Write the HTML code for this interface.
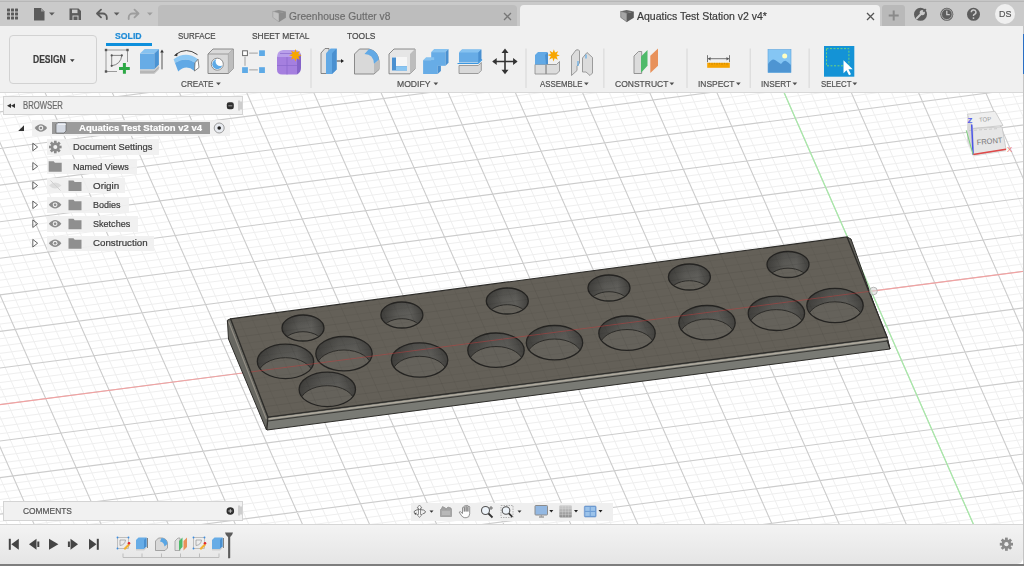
<!DOCTYPE html>
<html><head><meta charset="utf-8">
<style>
*{margin:0;padding:0;box-sizing:border-box}
html,body{width:1024px;height:566px;overflow:hidden;background:#fff;font-family:"Liberation Sans",sans-serif}
.abs{position:absolute}
.t{position:absolute;white-space:nowrap;transform-origin:0 0;line-height:1;-webkit-text-stroke:0.2px currentColor}
</style></head><body>
<svg class="abs" style="left:0;top:0" width="1024" height="566" viewBox="0 0 1024 566">
<defs>
<clipPath id="vp"><rect x="0" y="92" width="1024" height="432"/></clipPath>
<linearGradient id="wall" x1="0" y1="0" x2="1" y2="0">
<stop offset="0" stop-color="#3f3e3b"/><stop offset="0.4" stop-color="#5a5955"/><stop offset="0.7" stop-color="#5f5e5a"/><stop offset="1" stop-color="#42413e"/></linearGradient>
<linearGradient id="wallv" x1="0" y1="0" x2="0" y2="1">
<stop offset="0" stop-color="#000" stop-opacity="0.15"/><stop offset="0.45" stop-color="#000" stop-opacity="0"/></linearGradient>
<clipPath id="h0"><ellipse cx="303" cy="328" rx="21" ry="13"/></clipPath><clipPath id="h1"><ellipse cx="401.9" cy="315" rx="21" ry="13"/></clipPath><clipPath id="h2"><ellipse cx="507.3" cy="301" rx="21" ry="13"/></clipPath><clipPath id="h3"><ellipse cx="609" cy="288" rx="21" ry="13"/></clipPath><clipPath id="h4"><ellipse cx="689.4" cy="277" rx="21" ry="13"/></clipPath><clipPath id="h5"><ellipse cx="788" cy="264.5" rx="21" ry="13"/></clipPath><clipPath id="h6"><ellipse cx="285.5" cy="361.4" rx="28.2" ry="17.2"/></clipPath><clipPath id="h7"><ellipse cx="344" cy="353.7" rx="28.2" ry="17.2"/></clipPath><clipPath id="h8"><ellipse cx="327.3" cy="389.4" rx="28.2" ry="17.2"/></clipPath><clipPath id="h9"><ellipse cx="419.6" cy="360" rx="28.2" ry="17.2"/></clipPath><clipPath id="h10"><ellipse cx="496" cy="350.2" rx="28.2" ry="17.2"/></clipPath><clipPath id="h11"><ellipse cx="554.5" cy="342.7" rx="28.2" ry="17.2"/></clipPath><clipPath id="h12"><ellipse cx="627" cy="333.2" rx="28.2" ry="17.2"/></clipPath><clipPath id="h13"><ellipse cx="707" cy="322.7" rx="28.2" ry="17.2"/></clipPath><clipPath id="h14"><ellipse cx="776.4" cy="313.3" rx="28.2" ry="17.2"/></clipPath><clipPath id="h15"><ellipse cx="835" cy="305.5" rx="28.2" ry="17.2"/></clipPath>
<clipPath id="topf"><polygon points="230.6,318.8 847.0,237.0 887.0,337.0 268.0,417.0"/></clipPath>
</defs>
<g clip-path="url(#vp)">
<path d="M-9.9 698.0L-284.8 75.8M2.7 696.3L-272.1 74.1M15.4 694.7L-259.4 72.4M28.1 693.0L-246.7 70.8M53.5 689.7L-221.3 67.5M66.1 688.1L-208.6 65.8M78.8 686.4L-195.9 64.2M91.5 684.8L-183.1 62.5M116.9 681.5L-157.7 59.2M129.6 679.8L-145.0 57.5M142.2 678.2L-132.3 55.9M154.9 676.5L-119.6 54.2M180.3 673.2L-94.2 50.9M193.0 671.6L-81.5 49.2M205.7 669.9L-68.8 47.6M218.3 668.3L-56.1 45.9M243.7 665.0L-30.7 42.6M256.4 663.3L-18.0 41.0M269.1 661.7L-5.3 39.3M281.8 660.1L7.4 37.7M307.1 656.8L32.8 34.3M319.8 655.1L45.6 32.7M332.5 653.5L58.3 31.0M345.2 651.8L71.0 29.4M370.6 648.5L96.4 26.1M383.3 646.9L109.1 24.4M395.9 645.2L121.8 22.7M408.6 643.6L134.5 21.1M434.0 640.3L159.9 17.8M446.7 638.6L172.6 16.1M459.4 637.0L185.3 14.5M472.1 635.3L198.1 12.8M497.4 632.0L223.5 9.5M510.1 630.4L236.2 7.8M522.8 628.7L248.9 6.2M535.5 627.1L261.6 4.5M560.9 623.8L287.0 1.2M573.6 622.1L299.7 -0.5M586.3 620.5L312.4 -2.1M599.0 618.8L325.2 -3.8M624.3 615.5L350.6 -7.1M637.0 613.9L363.3 -8.7M649.7 612.2L376.0 -10.4M662.4 610.6L388.7 -12.1M687.8 607.3L414.1 -15.4M700.5 605.6L426.9 -17.0M713.2 604.0L439.6 -18.7M725.9 602.3L452.3 -20.4M751.2 599.0L477.7 -23.7M763.9 597.4L490.4 -25.3M776.6 595.7L503.1 -27.0M789.3 594.1L515.8 -28.6M814.7 590.7L541.3 -32.0M827.4 589.1L554.0 -33.6M840.1 587.4L566.7 -35.3M852.8 585.8L579.4 -36.9M878.2 582.5L604.8 -40.2M890.9 580.8L617.6 -41.9M903.6 579.2L630.3 -43.6M916.3 577.5L643.0 -45.2M941.6 574.2L668.4 -48.5M954.3 572.6L681.1 -50.2M967.0 570.9L693.9 -51.9M979.7 569.3L706.6 -53.5M1005.1 566.0L732.0 -56.8M1017.8 564.3L744.7 -58.5M1030.5 562.7L757.4 -60.1M1043.2 561.0L770.2 -61.8M1068.6 557.7L795.6 -65.1M1081.3 556.1L808.3 -66.8M1094.0 554.4L821.0 -68.4M1106.7 552.8L833.7 -70.1M1132.1 549.5L859.2 -73.4M1144.8 547.8L871.9 -75.1M1157.5 546.2L884.6 -76.7M1170.2 544.5L897.3 -78.4M1195.6 541.2L922.8 -81.7M1208.3 539.6L935.5 -83.4M1221.0 537.9L948.2 -85.0M1233.7 536.3L960.9 -86.7M1259.1 533.0L986.4 -90.0M1271.8 531.3L999.1 -91.7M1284.5 529.7L1011.8 -93.3M1297.2 528.0L1024.5 -95.0M-25.7 692.7L1306.8 519.5M-28.7 685.8L1303.8 512.5M-31.8 678.9L1300.8 505.6M-34.8 672.0L1297.8 498.7M-40.9 658.2L1291.7 484.9M-44.0 651.3L1288.7 478.0M-47.0 644.4L1285.7 471.1M-50.1 637.5L1282.6 464.2M-56.2 623.7L1276.6 450.3M-59.2 616.8L1273.6 443.4M-62.3 609.9L1270.5 436.5M-65.3 603.0L1267.5 429.6M-71.4 589.2L1261.5 415.8M-74.5 582.3L1258.4 408.9M-77.5 575.4L1255.4 401.9M-80.6 568.5L1252.4 395.0M-86.7 554.7L1246.3 381.2M-89.7 547.7L1243.3 374.3M-92.8 540.8L1240.3 367.4M-95.8 533.9L1237.3 360.5M-101.9 520.1L1231.2 346.6M-105.0 513.2L1228.2 339.7M-108.0 506.3L1225.2 332.8M-111.1 499.4L1222.1 325.9M-117.2 485.6L1216.1 312.0M-120.2 478.7L1213.0 305.1M-123.3 471.8L1210.0 298.2M-126.3 464.8L1207.0 291.3M-132.4 451.0L1200.9 277.4M-135.5 444.1L1197.9 270.5M-138.6 437.2L1194.9 263.6M-141.6 430.3L1191.8 256.7M-147.7 416.5L1185.8 242.8M-150.8 409.5L1182.8 235.9M-153.8 402.6L1179.7 229.0M-156.9 395.7L1176.7 222.1M-163.0 381.9L1170.6 208.2M-166.0 375.0L1167.6 201.3M-169.1 368.1L1164.6 194.4M-172.1 361.2L1161.6 187.5M-178.3 347.3L1155.5 173.6M-181.3 340.4L1152.5 166.7M-184.4 333.5L1149.4 159.8M-187.4 326.6L1146.4 152.8M-193.5 312.7L1140.4 139.0M-196.6 305.8L1137.3 132.1M-199.6 298.9L1134.3 125.1M-202.7 292.0L1131.3 118.2M-208.8 278.2L1125.2 104.4M-211.9 271.2L1122.2 97.4M-214.9 264.3L1119.1 90.5M-218.0 257.4L1116.1 83.6M-224.1 243.6L1110.0 69.7M-227.1 236.6L1107.0 62.8M-230.2 229.7L1104.0 55.9M-233.3 222.8L1100.9 48.9M-239.4 209.0L1094.9 35.1M-242.4 202.0L1091.9 28.2M-245.5 195.1L1088.8 21.2M-248.5 188.2L1085.8 14.3M-254.7 174.4L1079.7 0.4M-257.7 167.4L1076.7 -6.5M-260.8 160.5L1073.7 -13.4M-263.8 153.6L1070.6 -20.4M-269.9 139.7L1064.6 -34.2M-273.0 132.8L1061.5 -41.2M-276.1 125.9L1058.5 -48.1M-279.1 119.0L1055.5 -55.0M-285.2 105.1L1049.4 -68.9M-288.3 98.2L1046.4 -75.8M-291.4 91.3L1043.3 -82.8M-294.4 84.3L1040.3 -89.7" stroke="#efefef" stroke-width="1" fill="none"/>
<path d="M-22.6 699.6L-297.5 77.4M40.8 691.4L-234.0 69.1M104.2 683.1L-170.4 60.8M167.6 674.9L-106.9 52.6M231.0 666.6L-43.4 44.3M294.5 658.4L20.1 36.0M357.9 650.2L83.7 27.7M421.3 641.9L147.2 19.4M484.8 633.7L210.8 11.1M548.2 625.4L274.3 2.9M611.7 617.2L337.9 -5.4M675.1 608.9L401.4 -13.7M738.6 600.7L465.0 -22.0M802.0 592.4L528.6 -30.3M865.5 584.1L592.1 -38.6M928.9 575.9L655.7 -46.9M992.4 567.6L719.3 -55.2M1055.9 559.4L782.9 -63.5M1119.4 551.1L846.5 -71.8M1182.9 542.9L910.1 -80.0M1246.4 534.6L973.7 -88.3M1309.9 526.4L1037.3 -96.6M-22.6 699.6L1309.9 526.4M-37.9 665.1L1294.7 491.8M-53.1 630.6L1279.6 457.3M-68.4 596.1L1264.5 422.7M-83.6 561.6L1249.4 388.1M-98.9 527.0L1234.2 353.5M-114.1 492.5L1219.1 319.0M-129.4 457.9L1204.0 284.4M-144.7 423.4L1188.8 249.8M-159.9 388.8L1173.7 215.2M-175.2 354.2L1158.5 180.5M-190.5 319.7L1143.4 145.9M-205.7 285.1L1128.2 111.3M-221.0 250.5L1113.1 76.7M-236.3 215.9L1097.9 42.0M-251.6 181.3L1082.8 7.4M-266.9 146.7L1067.6 -27.3M-282.2 112.0L1052.4 -62.0M-297.5 77.4L1037.3 -96.6" stroke="#cccccc" stroke-width="1.1" fill="none"/>
<path d="M-144.7 423.4L1188.8 249.8" stroke="#f2a2a2" stroke-width="1.2"/>
<path d="M992.4 567.6L719.3 -55.2" stroke="#a6eaa6" stroke-width="1.2"/>
</g>
<!-- plate -->
<polygon points="230.6,318.8 227.4,320.2 228.5,339 266.5,430 268,417" fill="#676761" stroke="#2e2d2a" stroke-width="1"/>
<polygon points="268,417 887,337 890,349 267,430" fill="#797a74" stroke="#2e2d2a" stroke-width="1"/>
<polygon points="847,237 851,239 890,349 887,337" fill="#5e5d57" stroke="#2e2d2a" stroke-width="1"/>
<polygon points="230.6,318.8 847.0,237.0 887.0,337.0 268.0,417.0" fill="#646058" stroke="#2e2d2a" stroke-width="1.2"/>
<path d="M228.6 321.5 L266.3 419" stroke="#948f85" stroke-width="1.1"/><path d="M268.5 419 L887.5 339" stroke="#b0aa9e" stroke-width="1.5"/>
<path d="M268 421 L888 341" stroke="#3a3935" stroke-width="1"/>
<ellipse cx="303" cy="328" rx="21" ry="13" fill="url(#wall)"/><ellipse cx="303" cy="328" rx="21" ry="13" fill="url(#wallv)"/><g clip-path="url(#h0)"><ellipse cx="303" cy="344.7" rx="20.4" ry="13" fill="#65625b" stroke="#2e2d2a" stroke-width="1"/></g><ellipse cx="303" cy="328" rx="21" ry="13" fill="none" stroke="#252422" stroke-width="1.3"/><ellipse cx="401.9" cy="315" rx="21" ry="13" fill="url(#wall)"/><ellipse cx="401.9" cy="315" rx="21" ry="13" fill="url(#wallv)"/><g clip-path="url(#h1)"><ellipse cx="401.9" cy="331.7" rx="20.4" ry="13" fill="#65625b" stroke="#2e2d2a" stroke-width="1"/></g><ellipse cx="401.9" cy="315" rx="21" ry="13" fill="none" stroke="#252422" stroke-width="1.3"/><ellipse cx="507.3" cy="301" rx="21" ry="13" fill="url(#wall)"/><ellipse cx="507.3" cy="301" rx="21" ry="13" fill="url(#wallv)"/><g clip-path="url(#h2)"><ellipse cx="507.3" cy="317.7" rx="20.4" ry="13" fill="#65625b" stroke="#2e2d2a" stroke-width="1"/></g><ellipse cx="507.3" cy="301" rx="21" ry="13" fill="none" stroke="#252422" stroke-width="1.3"/><ellipse cx="609" cy="288" rx="21" ry="13" fill="url(#wall)"/><ellipse cx="609" cy="288" rx="21" ry="13" fill="url(#wallv)"/><g clip-path="url(#h3)"><ellipse cx="609" cy="304.7" rx="20.4" ry="13" fill="#65625b" stroke="#2e2d2a" stroke-width="1"/></g><ellipse cx="609" cy="288" rx="21" ry="13" fill="none" stroke="#252422" stroke-width="1.3"/><ellipse cx="689.4" cy="277" rx="21" ry="13" fill="url(#wall)"/><ellipse cx="689.4" cy="277" rx="21" ry="13" fill="url(#wallv)"/><g clip-path="url(#h4)"><ellipse cx="689.4" cy="293.7" rx="20.4" ry="13" fill="#65625b" stroke="#2e2d2a" stroke-width="1"/></g><ellipse cx="689.4" cy="277" rx="21" ry="13" fill="none" stroke="#252422" stroke-width="1.3"/><ellipse cx="788" cy="264.5" rx="21" ry="13" fill="url(#wall)"/><ellipse cx="788" cy="264.5" rx="21" ry="13" fill="url(#wallv)"/><g clip-path="url(#h5)"><ellipse cx="788" cy="281.2" rx="20.4" ry="13" fill="#65625b" stroke="#2e2d2a" stroke-width="1"/></g><ellipse cx="788" cy="264.5" rx="21" ry="13" fill="none" stroke="#252422" stroke-width="1.3"/><ellipse cx="285.5" cy="361.4" rx="28.2" ry="17.2" fill="url(#wall)"/><ellipse cx="285.5" cy="361.4" rx="28.2" ry="17.2" fill="url(#wallv)"/><g clip-path="url(#h6)"><ellipse cx="285.5" cy="374.9" rx="27.4" ry="17.2" fill="#65625b" stroke="#2e2d2a" stroke-width="1"/></g><ellipse cx="285.5" cy="361.4" rx="28.2" ry="17.2" fill="none" stroke="#252422" stroke-width="1.3"/><ellipse cx="344" cy="353.7" rx="28.2" ry="17.2" fill="url(#wall)"/><ellipse cx="344" cy="353.7" rx="28.2" ry="17.2" fill="url(#wallv)"/><g clip-path="url(#h7)"><ellipse cx="344" cy="367.2" rx="27.4" ry="17.2" fill="#65625b" stroke="#2e2d2a" stroke-width="1"/></g><ellipse cx="344" cy="353.7" rx="28.2" ry="17.2" fill="none" stroke="#252422" stroke-width="1.3"/><ellipse cx="327.3" cy="389.4" rx="28.2" ry="17.2" fill="url(#wall)"/><ellipse cx="327.3" cy="389.4" rx="28.2" ry="17.2" fill="url(#wallv)"/><g clip-path="url(#h8)"><ellipse cx="327.3" cy="402.9" rx="27.4" ry="17.2" fill="#65625b" stroke="#2e2d2a" stroke-width="1"/></g><ellipse cx="327.3" cy="389.4" rx="28.2" ry="17.2" fill="none" stroke="#252422" stroke-width="1.3"/><ellipse cx="419.6" cy="360" rx="28.2" ry="17.2" fill="url(#wall)"/><ellipse cx="419.6" cy="360" rx="28.2" ry="17.2" fill="url(#wallv)"/><g clip-path="url(#h9)"><ellipse cx="419.6" cy="373.5" rx="27.4" ry="17.2" fill="#65625b" stroke="#2e2d2a" stroke-width="1"/></g><ellipse cx="419.6" cy="360" rx="28.2" ry="17.2" fill="none" stroke="#252422" stroke-width="1.3"/><ellipse cx="496" cy="350.2" rx="28.2" ry="17.2" fill="url(#wall)"/><ellipse cx="496" cy="350.2" rx="28.2" ry="17.2" fill="url(#wallv)"/><g clip-path="url(#h10)"><ellipse cx="496" cy="363.7" rx="27.4" ry="17.2" fill="#65625b" stroke="#2e2d2a" stroke-width="1"/></g><ellipse cx="496" cy="350.2" rx="28.2" ry="17.2" fill="none" stroke="#252422" stroke-width="1.3"/><ellipse cx="554.5" cy="342.7" rx="28.2" ry="17.2" fill="url(#wall)"/><ellipse cx="554.5" cy="342.7" rx="28.2" ry="17.2" fill="url(#wallv)"/><g clip-path="url(#h11)"><ellipse cx="554.5" cy="356.2" rx="27.4" ry="17.2" fill="#65625b" stroke="#2e2d2a" stroke-width="1"/></g><ellipse cx="554.5" cy="342.7" rx="28.2" ry="17.2" fill="none" stroke="#252422" stroke-width="1.3"/><ellipse cx="627" cy="333.2" rx="28.2" ry="17.2" fill="url(#wall)"/><ellipse cx="627" cy="333.2" rx="28.2" ry="17.2" fill="url(#wallv)"/><g clip-path="url(#h12)"><ellipse cx="627" cy="346.7" rx="27.4" ry="17.2" fill="#65625b" stroke="#2e2d2a" stroke-width="1"/></g><ellipse cx="627" cy="333.2" rx="28.2" ry="17.2" fill="none" stroke="#252422" stroke-width="1.3"/><ellipse cx="707" cy="322.7" rx="28.2" ry="17.2" fill="url(#wall)"/><ellipse cx="707" cy="322.7" rx="28.2" ry="17.2" fill="url(#wallv)"/><g clip-path="url(#h13)"><ellipse cx="707" cy="336.2" rx="27.4" ry="17.2" fill="#65625b" stroke="#2e2d2a" stroke-width="1"/></g><ellipse cx="707" cy="322.7" rx="28.2" ry="17.2" fill="none" stroke="#252422" stroke-width="1.3"/><ellipse cx="776.4" cy="313.3" rx="28.2" ry="17.2" fill="url(#wall)"/><ellipse cx="776.4" cy="313.3" rx="28.2" ry="17.2" fill="url(#wallv)"/><g clip-path="url(#h14)"><ellipse cx="776.4" cy="326.8" rx="27.4" ry="17.2" fill="#65625b" stroke="#2e2d2a" stroke-width="1"/></g><ellipse cx="776.4" cy="313.3" rx="28.2" ry="17.2" fill="none" stroke="#252422" stroke-width="1.3"/><ellipse cx="835" cy="305.5" rx="28.2" ry="17.2" fill="url(#wall)"/><ellipse cx="835" cy="305.5" rx="28.2" ry="17.2" fill="url(#wallv)"/><g clip-path="url(#h15)"><ellipse cx="835" cy="319.0" rx="27.4" ry="17.2" fill="#65625b" stroke="#2e2d2a" stroke-width="1"/></g><ellipse cx="835" cy="305.5" rx="28.2" ry="17.2" fill="none" stroke="#252422" stroke-width="1.3"/>
<circle cx="873.5" cy="291" r="3.8" fill="#d8d8d8" fill-opacity="0.6" stroke="#a8a8a8" stroke-width="0.8"/>
<g clip-path="url(#topf)">
<path d="M-9.9 698.0L-284.8 75.8M2.7 696.3L-272.1 74.1M15.4 694.7L-259.4 72.4M28.1 693.0L-246.7 70.8M53.5 689.7L-221.3 67.5M66.1 688.1L-208.6 65.8M78.8 686.4L-195.9 64.2M91.5 684.8L-183.1 62.5M116.9 681.5L-157.7 59.2M129.6 679.8L-145.0 57.5M142.2 678.2L-132.3 55.9M154.9 676.5L-119.6 54.2M180.3 673.2L-94.2 50.9M193.0 671.6L-81.5 49.2M205.7 669.9L-68.8 47.6M218.3 668.3L-56.1 45.9M243.7 665.0L-30.7 42.6M256.4 663.3L-18.0 41.0M269.1 661.7L-5.3 39.3M281.8 660.1L7.4 37.7M307.1 656.8L32.8 34.3M319.8 655.1L45.6 32.7M332.5 653.5L58.3 31.0M345.2 651.8L71.0 29.4M370.6 648.5L96.4 26.1M383.3 646.9L109.1 24.4M395.9 645.2L121.8 22.7M408.6 643.6L134.5 21.1M434.0 640.3L159.9 17.8M446.7 638.6L172.6 16.1M459.4 637.0L185.3 14.5M472.1 635.3L198.1 12.8M497.4 632.0L223.5 9.5M510.1 630.4L236.2 7.8M522.8 628.7L248.9 6.2M535.5 627.1L261.6 4.5M560.9 623.8L287.0 1.2M573.6 622.1L299.7 -0.5M586.3 620.5L312.4 -2.1M599.0 618.8L325.2 -3.8M624.3 615.5L350.6 -7.1M637.0 613.9L363.3 -8.7M649.7 612.2L376.0 -10.4M662.4 610.6L388.7 -12.1M687.8 607.3L414.1 -15.4M700.5 605.6L426.9 -17.0M713.2 604.0L439.6 -18.7M725.9 602.3L452.3 -20.4M751.2 599.0L477.7 -23.7M763.9 597.4L490.4 -25.3M776.6 595.7L503.1 -27.0M789.3 594.1L515.8 -28.6M814.7 590.7L541.3 -32.0M827.4 589.1L554.0 -33.6M840.1 587.4L566.7 -35.3M852.8 585.8L579.4 -36.9M878.2 582.5L604.8 -40.2M890.9 580.8L617.6 -41.9M903.6 579.2L630.3 -43.6M916.3 577.5L643.0 -45.2M941.6 574.2L668.4 -48.5M954.3 572.6L681.1 -50.2M967.0 570.9L693.9 -51.9M979.7 569.3L706.6 -53.5M1005.1 566.0L732.0 -56.8M1017.8 564.3L744.7 -58.5M1030.5 562.7L757.4 -60.1M1043.2 561.0L770.2 -61.8M1068.6 557.7L795.6 -65.1M1081.3 556.1L808.3 -66.8M1094.0 554.4L821.0 -68.4M1106.7 552.8L833.7 -70.1M1132.1 549.5L859.2 -73.4M1144.8 547.8L871.9 -75.1M1157.5 546.2L884.6 -76.7M1170.2 544.5L897.3 -78.4M1195.6 541.2L922.8 -81.7M1208.3 539.6L935.5 -83.4M1221.0 537.9L948.2 -85.0M1233.7 536.3L960.9 -86.7M1259.1 533.0L986.4 -90.0M1271.8 531.3L999.1 -91.7M1284.5 529.7L1011.8 -93.3M1297.2 528.0L1024.5 -95.0M-25.7 692.7L1306.8 519.5M-28.7 685.8L1303.8 512.5M-31.8 678.9L1300.8 505.6M-34.8 672.0L1297.8 498.7M-40.9 658.2L1291.7 484.9M-44.0 651.3L1288.7 478.0M-47.0 644.4L1285.7 471.1M-50.1 637.5L1282.6 464.2M-56.2 623.7L1276.6 450.3M-59.2 616.8L1273.6 443.4M-62.3 609.9L1270.5 436.5M-65.3 603.0L1267.5 429.6M-71.4 589.2L1261.5 415.8M-74.5 582.3L1258.4 408.9M-77.5 575.4L1255.4 401.9M-80.6 568.5L1252.4 395.0M-86.7 554.7L1246.3 381.2M-89.7 547.7L1243.3 374.3M-92.8 540.8L1240.3 367.4M-95.8 533.9L1237.3 360.5M-101.9 520.1L1231.2 346.6M-105.0 513.2L1228.2 339.7M-108.0 506.3L1225.2 332.8M-111.1 499.4L1222.1 325.9M-117.2 485.6L1216.1 312.0M-120.2 478.7L1213.0 305.1M-123.3 471.8L1210.0 298.2M-126.3 464.8L1207.0 291.3M-132.4 451.0L1200.9 277.4M-135.5 444.1L1197.9 270.5M-138.6 437.2L1194.9 263.6M-141.6 430.3L1191.8 256.7M-147.7 416.5L1185.8 242.8M-150.8 409.5L1182.8 235.9M-153.8 402.6L1179.7 229.0M-156.9 395.7L1176.7 222.1M-163.0 381.9L1170.6 208.2M-166.0 375.0L1167.6 201.3M-169.1 368.1L1164.6 194.4M-172.1 361.2L1161.6 187.5M-178.3 347.3L1155.5 173.6M-181.3 340.4L1152.5 166.7M-184.4 333.5L1149.4 159.8M-187.4 326.6L1146.4 152.8M-193.5 312.7L1140.4 139.0M-196.6 305.8L1137.3 132.1M-199.6 298.9L1134.3 125.1M-202.7 292.0L1131.3 118.2M-208.8 278.2L1125.2 104.4M-211.9 271.2L1122.2 97.4M-214.9 264.3L1119.1 90.5M-218.0 257.4L1116.1 83.6M-224.1 243.6L1110.0 69.7M-227.1 236.6L1107.0 62.8M-230.2 229.7L1104.0 55.9M-233.3 222.8L1100.9 48.9M-239.4 209.0L1094.9 35.1M-242.4 202.0L1091.9 28.2M-245.5 195.1L1088.8 21.2M-248.5 188.2L1085.8 14.3M-254.7 174.4L1079.7 0.4M-257.7 167.4L1076.7 -6.5M-260.8 160.5L1073.7 -13.4M-263.8 153.6L1070.6 -20.4M-269.9 139.7L1064.6 -34.2M-273.0 132.8L1061.5 -41.2M-276.1 125.9L1058.5 -48.1M-279.1 119.0L1055.5 -55.0M-285.2 105.1L1049.4 -68.9M-288.3 98.2L1046.4 -75.8M-291.4 91.3L1043.3 -82.8M-294.4 84.3L1040.3 -89.7" stroke="#000" stroke-opacity="0.035" stroke-width="1" fill="none"/>
<path d="M-22.6 699.6L-297.5 77.4M40.8 691.4L-234.0 69.1M104.2 683.1L-170.4 60.8M167.6 674.9L-106.9 52.6M231.0 666.6L-43.4 44.3M294.5 658.4L20.1 36.0M357.9 650.2L83.7 27.7M421.3 641.9L147.2 19.4M484.8 633.7L210.8 11.1M548.2 625.4L274.3 2.9M611.7 617.2L337.9 -5.4M675.1 608.9L401.4 -13.7M738.6 600.7L465.0 -22.0M802.0 592.4L528.6 -30.3M865.5 584.1L592.1 -38.6M928.9 575.9L655.7 -46.9M992.4 567.6L719.3 -55.2M1055.9 559.4L782.9 -63.5M1119.4 551.1L846.5 -71.8M1182.9 542.9L910.1 -80.0M1246.4 534.6L973.7 -88.3M1309.9 526.4L1037.3 -96.6M-22.6 699.6L1309.9 526.4M-37.9 665.1L1294.7 491.8M-53.1 630.6L1279.6 457.3M-68.4 596.1L1264.5 422.7M-83.6 561.6L1249.4 388.1M-98.9 527.0L1234.2 353.5M-114.1 492.5L1219.1 319.0M-129.4 457.9L1204.0 284.4M-144.7 423.4L1188.8 249.8M-159.9 388.8L1173.7 215.2M-175.2 354.2L1158.5 180.5M-190.5 319.7L1143.4 145.9M-205.7 285.1L1128.2 111.3M-221.0 250.5L1113.1 76.7M-236.3 215.9L1097.9 42.0M-251.6 181.3L1082.8 7.4M-266.9 146.7L1067.6 -27.3M-282.2 112.0L1052.4 -62.0M-297.5 77.4L1037.3 -96.6" stroke="#000" stroke-opacity="0.06" stroke-width="1" fill="none"/>
<path d="M-144.7 423.4L1188.8 249.8" stroke="#e04040" stroke-opacity="0.4" stroke-width="1"/>
</g>
</svg>
<div class="abs" style="left:0;top:0;width:1024px;height:26px;background:#cacaca"></div>
<div class="abs" style="left:0;top:0;width:1024px;height:1px;background:#c6c6c6"></div>
<div class="abs" style="left:0;top:1px;width:1024px;height:1px;background:#b7b7b7"></div>
<div class="abs" style="left:157.5px;top:5px;width:359px;height:21px;background:#bdbdbd;border-radius:4px 4px 0 0"></div>
<div class="abs" style="left:520px;top:5px;width:360px;height:22px;background:#f0f0f0;border-radius:4px 4px 0 0"></div>
<div class="abs" style="left:882px;top:5px;width:23px;height:21px;background:#b9b9b9;border-radius:3px 3px 0 0"></div>
<div class="abs" style="left:995px;top:4.2px;width:20px;height:20px;background:#efefef;border-radius:50%"></div>
<div class="abs" style="left:0;top:26px;width:1024px;height:67px;background:#f0f0f0;border-bottom:1px solid #d8d8d8"></div>
<div class="abs" style="left:9px;top:35px;width:88px;height:49px;border:1px solid #d2d2d2;border-radius:4px"></div>
<div class="abs" style="left:106px;top:43px;width:46px;height:3px;background:#0d8fdc"></div>
<div class="abs" style="left:1023px;top:26px;width:1px;height:540px;background:#c4c4c4"></div>
<div class="abs" style="left:1023px;top:34px;width:1px;height:40px;background:#2a6fc4"></div>
<div class="abs" style="left:3px;top:96px;width:240px;height:19px;background:#f1f1f1;border:1px solid #d4d4d4"></div>
<div class="abs" style="left:32px;top:120.3px;width:198.0px;height:15.5px;background:rgba(240,240,240,0.92)"></div>
<div class="abs" style="left:46.5px;top:139.3px;width:112.5px;height:15.5px;background:rgba(240,240,240,0.92)"></div>
<div class="abs" style="left:46.5px;top:158.6px;width:90.5px;height:15.5px;background:rgba(240,240,240,0.92)"></div>
<div class="abs" style="left:46.5px;top:177.8px;width:78.2px;height:15.5px;background:rgba(240,240,240,0.92)"></div>
<div class="abs" style="left:46.5px;top:197.1px;width:82.1px;height:15.5px;background:rgba(240,240,240,0.92)"></div>
<div class="abs" style="left:46.5px;top:216.0px;width:91.1px;height:15.5px;background:rgba(240,240,240,0.92)"></div>
<div class="abs" style="left:46.5px;top:235.5px;width:107.3px;height:15.5px;background:rgba(240,240,240,0.92)"></div>
<div class="abs" style="left:52px;top:121.5px;width:158px;height:12.5px;background:#9b9b9b"></div>
<div class="abs" style="left:3px;top:501px;width:240px;height:20px;background:#f1f1f1;border:1px solid #d4d4d4"></div>
<div class="abs" style="left:411px;top:502.5px;width:202px;height:18px;background:#efefef"></div>
<div class="abs" style="left:0;top:524px;width:1023px;height:40px;background:linear-gradient(#f3f3f3,#e5e5e5);border-top:1px solid #d6d6d6;border-radius:0 0 6px 0"></div>
<div class="abs" style="left:0;top:563.5px;width:1024px;height:3px;background:#7d7d7d"></div>
<div class="t" style="left:289.00px;top:10.16px;font-size:11.63px;color:#6d6d6d;transform:scaleX(0.882);">Greenhouse Gutter v8</div>
<div class="t" style="left:637.00px;top:10.16px;font-size:11.63px;color:#3a3a3a;transform:scaleX(0.903);">Aquatics Test Station v2 v4*</div>
<div class="t" style="left:999.00px;top:9.36px;font-size:9.74px;color:#555;transform:scaleX(0.917);">DS</div>
<div class="t" style="left:115.30px;top:31.16px;font-size:9.74px;font-weight:bold;color:#1d8ad6;transform:scaleX(0.894);">SOLID</div>
<div class="t" style="left:177.70px;top:31.16px;font-size:9.74px;color:#4a4a4a;transform:scaleX(0.815);">SURFACE</div>
<div class="t" style="left:251.50px;top:31.16px;font-size:9.74px;color:#4a4a4a;transform:scaleX(0.862);">SHEET METAL</div>
<div class="t" style="left:346.50px;top:31.16px;font-size:9.74px;color:#4a4a4a;transform:scaleX(0.868);">TOOLS</div>
<div class="t" style="left:32.80px;top:54.69px;font-size:10.17px;font-weight:bold;color:#3c3c3c;transform:scaleX(0.841);">DESIGN</div>
<div class="t" style="left:181.30px;top:79.93px;font-size:9.30px;color:#505050;transform:scaleX(0.877);">CREATE</div>
<div class="t" style="left:396.50px;top:79.93px;font-size:9.30px;color:#505050;transform:scaleX(0.926);">MODIFY</div>
<div class="t" style="left:539.50px;top:79.93px;font-size:9.30px;color:#505050;transform:scaleX(0.847);">ASSEMBLE</div>
<div class="t" style="left:614.50px;top:79.93px;font-size:9.30px;color:#505050;transform:scaleX(0.916);">CONSTRUCT</div>
<div class="t" style="left:698.00px;top:79.93px;font-size:9.30px;color:#505050;transform:scaleX(0.905);">INSPECT</div>
<div class="t" style="left:761.00px;top:79.93px;font-size:9.30px;color:#505050;transform:scaleX(0.884);">INSERT</div>
<div class="t" style="left:820.50px;top:79.93px;font-size:9.30px;color:#505050;transform:scaleX(0.843);">SELECT</div>
<div class="t" style="left:23.00px;top:101.39px;font-size:10.17px;color:#6a6a6a;transform:scaleX(0.761);">BROWSER</div>
<div class="t" style="left:78.70px;top:123.18px;font-size:9.59px;font-weight:bold;color:#ffffff;transform:scaleX(0.994);">Aquatics Test Station v2 v4</div>
<div class="t" style="left:73.00px;top:142.28px;font-size:9.59px;color:#3a3a3a;transform:scaleX(0.982);">Document Settings</div>
<div class="t" style="left:73.00px;top:161.58px;font-size:9.59px;color:#3a3a3a;transform:scaleX(0.949);">Named Views</div>
<div class="t" style="left:92.50px;top:180.78px;font-size:9.59px;color:#3a3a3a;transform:scaleX(1.024);">Origin</div>
<div class="t" style="left:92.50px;top:200.08px;font-size:9.59px;color:#3a3a3a;transform:scaleX(0.938);">Bodies</div>
<div class="t" style="left:92.50px;top:218.98px;font-size:9.59px;color:#3a3a3a;transform:scaleX(0.945);">Sketches</div>
<div class="t" style="left:92.50px;top:238.48px;font-size:9.59px;color:#3a3a3a;transform:scaleX(1.016);">Construction</div>
<div class="t" style="left:23.40px;top:506.08px;font-size:9.59px;color:#555;transform:scaleX(0.876);">COMMENTS</div>
<svg class="abs" style="left:0;top:0" width="1024" height="566" viewBox="0 0 1024 566">
<rect x="7" y="8.6" width="3" height="3" rx="0.5" fill="#5b5b5b"/>
<rect x="7" y="12.6" width="3" height="3" rx="0.5" fill="#5b5b5b"/>
<rect x="7" y="16.6" width="3" height="3" rx="0.5" fill="#5b5b5b"/>
<rect x="11" y="8.6" width="3" height="3" rx="0.5" fill="#5b5b5b"/>
<rect x="11" y="12.6" width="3" height="3" rx="0.5" fill="#5b5b5b"/>
<rect x="11" y="16.6" width="3" height="3" rx="0.5" fill="#5b5b5b"/>
<rect x="15" y="8.6" width="3" height="3" rx="0.5" fill="#5b5b5b"/>
<rect x="15" y="12.6" width="3" height="3" rx="0.5" fill="#5b5b5b"/>
<rect x="15" y="16.6" width="3" height="3" rx="0.5" fill="#5b5b5b"/>
<path d="M34 8h7l3.5 3.5V20.6H34z" fill="#5b5b5b"/><path d="M41 8v3.5h3.5" fill="#9a9a9a"/>
<path d="M49 12.5h5.7l-2.85 3.1z" fill="#5b5b5b"/>
<path d="M69.5 8.6h9l2.5 2.5V20h-11.5z" fill="#5b5b5b"/><rect x="72" y="9.6" width="5.5" height="3.5" fill="#cacaca"/><rect x="72.5" y="15.5" width="6" height="4.5" fill="#cacaca"/><rect x="73.5" y="16.5" width="4" height="3.5" fill="#5b5b5b"/>
<path d="M97 13.5l4-3.8M97 13.5l4 3.8M97.3 13.5h5.5a4 4 0 0 1 4 4v1.5" stroke="#5b5b5b" stroke-width="1.8" fill="none" stroke-linecap="round"/>
<path d="M113.8 12.5h5.7l-2.85 3.1z" fill="#5b5b5b"/>
<path d="M138.5 13.5l-4-3.8M138.5 13.5l-4 3.8M138.2 13.5h-5.5a4 4 0 0 0 -4 4v1.5" stroke="#9d9d9d" stroke-width="1.8" fill="none" stroke-linecap="round"/>
<path d="M147 12.5h5.7l-2.85 3.1z" fill="#9d9d9d"/>
<polygon points="272.8,11.2 278.7,10.0 285.9,11.6 279.0,13.2" fill="#8f8f8f"/><polygon points="272.8,11.2 279.0,13.2 279.0,21.9 272.8,17.4" fill="#c2c2c2" stroke="#999" stroke-width="0.6"/><polygon points="279.0,13.2 285.9,11.6 285.9,17.8 279.0,21.9" fill="#8c8c8c"/>
<polygon points="620.7,11.2 626.6,10.0 633.8,11.6 626.9,13.2" fill="#676767"/><polygon points="620.7,11.2 626.9,13.2 626.9,21.9 620.7,17.4" fill="#a6a6a6" stroke="#666" stroke-width="0.6"/><polygon points="626.9,13.2 633.8,11.6 633.8,17.8 626.9,21.9" fill="#5b5b5b"/>
<path d="M504 13l7 7M511 13l-7 7" stroke="#777" stroke-width="1.3"/>
<path d="M867 13l7 7M874 13l-7 7" stroke="#555" stroke-width="1.3"/>
<path d="M893.7 10.5v10M888.7 15.5h10" stroke="#8a8a8a" stroke-width="2"/>
<circle cx="920.5" cy="14.3" r="6.5" fill="#5d5d5d"/><path d="M916.8 18.2l4.2 -4.2" stroke="#cacaca" stroke-width="2" stroke-linecap="round"/><circle cx="922.3" cy="12.6" r="2.6" fill="#cacaca"/><path d="M923.3 11.6l2.5 -2.5" stroke="#5d5d5d" stroke-width="2"/>
<circle cx="946.8" cy="14.3" r="6.5" fill="#5d5d5d"/><circle cx="946.8" cy="14.3" r="5.3" fill="none" stroke="#cacaca" stroke-width="0.7"/><path d="M946.8 10.8v3.8h3" stroke="#cacaca" stroke-width="1.3" fill="none"/>
<circle cx="973.5" cy="14.3" r="6.5" fill="#5d5d5d"/><path d="M971.3 12.3a2.3 2.3 0 1 1 3 2.1c-.8.3 -.8 .8 -.8 1.6" stroke="#cacaca" stroke-width="1.5" fill="none"/><circle cx="973.5" cy="18.1" r="0.9" fill="#cacaca"/>
<path d="M70 59.3h4.6l-2.3 2.6z" fill="#3c3c3c"/>
<path d="M216.1 82.4h4.7l-2.35 2.8z" fill="#505050"/>
<path d="M433.5 82.4h4.7l-2.35 2.8z" fill="#505050"/>
<path d="M584 82.4h4.7l-2.35 2.8z" fill="#505050"/>
<path d="M669.5 82.4h4.7l-2.35 2.8z" fill="#505050"/>
<path d="M736 82.4h4.7l-2.35 2.8z" fill="#505050"/>
<path d="M792.5 82.4h4.7l-2.35 2.8z" fill="#505050"/>
<path d="M852.5 82.4h4.7l-2.35 2.8z" fill="#505050"/>
<rect x="310.5" y="48.5" width="1" height="39.5" fill="#d6d6d6"/>
<rect x="525.5" y="48.5" width="1" height="39.5" fill="#d6d6d6"/>
<rect x="603.4" y="48.5" width="1" height="39.5" fill="#d6d6d6"/>
<rect x="686.5" y="48.5" width="1" height="39.5" fill="#d6d6d6"/>
<rect x="749.7" y="48.5" width="1" height="39.5" fill="#d6d6d6"/>
<rect x="808.6" y="48.5" width="1" height="39.5" fill="#d6d6d6"/>
<path d="M106 50h21.5M106 50v21.5h11M127.5 50v12" stroke="#9a9a9a" stroke-width="1" fill="none"/>
<rect x="104.8" y="48.8" width="2.4" height="2.4" fill="#555"/>
<rect x="126.3" y="48.8" width="2.4" height="2.4" fill="#555"/>
<rect x="104.8" y="70.3" width="2.4" height="2.4" fill="#555"/>
<path d="M111.7 55.4h10M111.7 55.4v10.4M121.8 55.4q-1 9 -10.1 10.4" stroke="#777" stroke-width="0.9" fill="none"/>
<circle cx="111.7" cy="55.4" r="1.1" fill="#555"/>
<circle cx="121.8" cy="55.4" r="1.1" fill="#555"/>
<circle cx="111.7" cy="65.8" r="1.1" fill="#555"/>
<path d="M124.4 63v10.8M119 68.4h10.8" stroke="#2ca845" stroke-width="3"/>
<path d="M140 53.6l4.6 -4.6h14.3l-4.6 4.6z" fill="#86c2f0"/><rect x="140" y="53.6" width="14.3" height="15.8" fill="#67acE6"/><path d="M154.3 53.6l4.6 -4.6v15.8l-4.6 4.6z" fill="#4a93d3"/>
<path d="M140 69.4h14.3l4.6 -4.6v4.6l-4.6 4.6h-14.3z" fill="#c9c9c9"/><path d="M140 72h14.3l4.6 -4.6" stroke="#9c9c9c" stroke-width="0.8" fill="none"/>
<path d="M162 69.4v-18" stroke="#555" stroke-width="1"/><path d="M160.2 52.5l1.8 -3l1.8 3z" fill="#333"/>
<path d="M175.5 54.5Q186.3 46.5 197.5 54.7" stroke="#444" stroke-width="1" fill="none"/><path d="M173.8 55.6l3.8 -2.6l-0.4 3.2z" fill="#333"/>
<path d="M173.6 59.2Q186 50.5 198 59.2L195 62.8Q186 56 175.2 62.8Z" fill="#8cc8f4"/>
<path d="M173.6 59.2L175.2 62.8Q186 56 195 62.8L194.5 70.9Q186 64 178.2 71.4Z" fill="#62a9e5"/>
<path d="M195 62.8L198 59.2L199 67.5L194.5 71Z" fill="#fff" stroke="#555" stroke-width="0.7"/>
<path d="M208 54l5 -5h20.4v19.5l-5 5h-20.4z" fill="#d9d9d9" stroke="#8a8a8a" stroke-width="1"/><path d="M208 54h20.4v19.5M228.4 54l5 -5" stroke="#8a8a8a" stroke-width="0.8" fill="none"/><path d="M228.4 54l5 -5v19.5l-5 5z" fill="#bdbdbd"/>
<defs><mask id="holeMask"><rect x="200" y="40" width="40" height="40" fill="#fff"/><circle cx="220.2" cy="61.4" r="4.6" fill="#000"/></mask></defs><circle cx="217.3" cy="64.2" r="6" fill="#fff" stroke="#777" stroke-width="0.8"/><circle cx="217.3" cy="64.2" r="5" fill="#5eaae6" mask="url(#holeMask)"/>
<path d="M249.2 53.1h8.6M245 56.7v9.1M249.2 69.9h8.6" stroke="#a0a0a0" stroke-width="1"/>
<rect x="242.6" y="50.8" width="4.8" height="4.8" fill="#fff" stroke="#6a6a6a" stroke-width="1"/><rect x="259.1" y="50.3" width="5.8" height="5.7" fill="#5eaae6"/><rect x="242.1" y="67.2" width="5.8" height="5.8" fill="#5eaae6"/><rect x="259.1" y="67.2" width="5.8" height="5.8" fill="#5eaae6"/>
<path d="M277 57q0 -6 6 -7h12q4 0 6 4l-4 3h-20z" fill="#b99fea"/>
<path d="M277 57h20v17.5h-15q-5 0 -5 -5z" fill="#a57fdf"/>
<path d="M297 57l4 -3v14q0 4 -4 6.5z" fill="#8563c8"/>
<path d="M277 65.5h20M287 57v17.5M280 53.5h18" stroke="#8a68cc" stroke-width="0.7"/>
<path d="M295.4 48.9l1.2 3.4l3.3 -1.4l-1.6 3.2l3.4 1.3l-3.4 1.1l1.4 3.3l-3.2 -1.6l-1.2 3.4l-1.1 -3.4l-3.3 1.4l1.6 -3.2l-3.4 -1.2l3.4 -1.2l-1.4 -3.3l3.2 1.6z" fill="#f7a600"/>
<path d="M321 53l4 -4.5h4v25h-8z" fill="#e2e2e2" stroke="#7a7a7a" stroke-width="0.9"/><path d="M326 53.2l4.6 -4.6h6v20.8l-4.6 4.6h-6z" fill="#62a9e5"/><path d="M332 53.2l4.6 -4.6v20.8l-4.6 4.6z" fill="#4a90d0"/><path d="M336.8 61h4.5" stroke="#444" stroke-width="1"/><path d="M341 59l3 2l-3 2z" fill="#222"/>
<path d="M354.5 54l5 -5h9.5q9 2 10 12v8.5l-5 4.5h-19.5z" fill="#d9d9d9" stroke="#7f7f7f" stroke-width="0.9"/><path d="M364.5 54q9 0 9.5 10l5 -4.5q-1 -9 -10 -10.5z" fill="#62a9e5"/><path d="M374 64v9.5l5 -4.5v-9z" fill="#bdbdbd"/>
<path d="M389 54l5 -5h21v19.8l-5 5h-21z" fill="#e6e6e6" stroke="#7f7f7f" stroke-width="0.9"/><path d="M410 54l5 -5v19.8l-5 5z" fill="#bdbdbd"/><rect x="392" y="57" width="15" height="13.5" fill="#f6f6f6"/><path d="M392 57.5h4v8.8h11v4.2h-15z" fill="#4a90d0"/><path d="M396 66.3h11v4.2h-11z" fill="#8ac6f2"/>
<path d="M431.2 52.1l3 -3h14.3l-3 3z" fill="#86c2f0"/><rect x="431.2" y="52.1" width="14.3" height="13.7" fill="#67ace6"/><path d="M445.5 52.1l3 -3v13.7l-3 3z" fill="#4a90d0"/>
<path d="M423.1 60.2l3 -3h8.1v3z" fill="#86c2f0"/><rect x="423.1" y="60.2" width="14.5" height="13.8" fill="#67ace6"/><path d="M437.6 65.8h3.3v5.2l-3.3 3z" fill="#4a90d0"/>
<path d="M459 52.5l3 -3h19.3v10l-3 3h-19.3z" fill="#67ace6"/><path d="M459 52.5l3 -3h19.3l-3 3z" fill="#86c2f0"/><path d="M478.3 52.5l3 -3v10l-3 3z" fill="#4a90d0"/><path d="M457.5 63.5h20.5l4 -4" stroke="#3a97e0" stroke-width="1.1" fill="none"/><path d="M459 65.5h19.3l3 -3v8l-3 3h-19.3z" fill="#d9d9d9" stroke="#888" stroke-width="0.8"/>
<path d="M505 50v23M493.5 61.5h23" stroke="#333" stroke-width="1.6"/><path d="M505 48.6l-3.5 4.5h7z M505 74.2l-3.5 -4.5h7z M492.2 61.5l4.5 -3.5v7z M517.6 61.5l-4.5 -3.5v7z" fill="#333"/>
<path d="M535 64.5h11v9.5h-11z M546 64.5h10.5l3 -3v9.5l-3 3h-10.5z" fill="#dcdcdc" stroke="#888" stroke-width="0.8"/><path d="M535 55l3 -3h9v12.5h-12z" fill="#62a9e5"/><path d="M545 55l3 -3v12l-2 0z" fill="#4a90d0"/>
<path d="M553.9 49.3l1.1 3.2l3.2 -1.3l-1.6 3.1l3.2 1.3l-3.3 1l1.3 3.2l-3.1 -1.6l-1.3 3.2l-1 -3.3l-3.2 1.3l1.6 -3.1l-3.2 -1.3l3.3 -1l-1.3 -3.2l3.1 1.6z" fill="#f7a600"/>
<path d="M571.5 56l4.5 -6q3 -1 3.5 1v12l-2.5 3v4.5l-5.5 5z" fill="#dcdcdc" stroke="#888" stroke-width="0.8"/><path d="M582.5 58l4.5 -5.5l5.5 5v15.5l-2.5 2.5l-4 -3.5l-3.5 0v-8z" fill="#dcdcdc" stroke="#888" stroke-width="0.8"/><path d="M578 61v5M586 54.5v4" stroke="#5eaae6" stroke-width="1.2"/>
<path d="M634 56l4.5 -4.5h3.2v22h-7.7z" fill="#dcdcdc" stroke="#8a8a8a" stroke-width="0.9"/><path d="M641 56.5l6.5 -6.5v15.7l-6.5 7z" fill="#4fba6a"/><path d="M650.3 55.7l7.7 -7.1v17.2l-7.7 7.1z" fill="#e8915a"/>
<path d="M707.5 55.2v7M729.5 55.2v7M708 58.7h21" stroke="#666" stroke-width="0.9"/><path d="M708 58.7l2.5 -1.8v3.6z M729 58.7l-2.5 -1.8v3.6z" fill="#555"/><rect x="707.2" y="62.8" width="22.6" height="5" fill="#f5a300"/><path d="M709.5 62.8v1.5M712 62.8v2.2M714.5 62.8v1.5M717 62.8v2.2M719.5 62.8v1.5M722 62.8v2.2M724.5 62.8v1.5M727 62.8v2.2" stroke="#b57a00" stroke-width="0.5"/>
<rect x="768" y="49.5" width="23" height="23" fill="#85c6f4"/><path d="M768 64q4 -6 7 -4t6 4q3 -4 5 -3t5 4v7.5h-23z" fill="#4e95d2"/><circle cx="784.7" cy="56" r="2.5" fill="#ffffc2"/><rect x="768" y="49.5" width="23" height="23" fill="none" stroke="#5ea3dc" stroke-width="0.6"/>
<rect x="824" y="46" width="30.3" height="30.7" fill="#1493d6"/><rect x="826.5" y="48.6" width="22.4" height="17.2" fill="none" stroke="#6ed27c" stroke-width="1" stroke-dasharray="2 1.5"/><path d="M843.5 60.3v13l3 -3l2.5 5l2 -1l-2.5 -5h4.2z" fill="#fff"/><path d="M7 105.8l4 -2.3v4.6z M11 105.8l4 -2.3v4.6z" fill="#333"/>
<rect x="226.8" y="102.3" width="7" height="7" rx="2.2" fill="#2e2e2e"/><rect x="228.3" y="105.3" width="4" height="1" fill="#999"/>
<path d="M239 100.5v10M241 101.5v8" stroke="#999" stroke-width="0.8"/>
<path d="M18.2 131h5.8v-5.8z" fill="#333"/>
<path d="M34.65 128q6.25 -7.5 12.5 0q-6.25 7.5 -12.5 0z" fill="#8c8c8c"/><circle cx="40.9" cy="128" r="2.4" fill="#f0f0f0"/><circle cx="40.9" cy="128" r="1.3" fill="#8c8c8c"/>
<path d="M56 124.5l2 -2h8v8.5l-2 2h-8z" fill="#d5dae3" stroke="#555" stroke-width="0.6"/><path d="M58 124.5h8" stroke="#fff" stroke-width="0.6"/>
<circle cx="219.2" cy="128" r="5" fill="#e8ebf0" stroke="#888" stroke-width="0.8"/><circle cx="219.2" cy="128" r="1.8" fill="#222"/>
<path d="M32.8 143.2l4.8 3.8l-4.8 3.8z" fill="none" stroke="#555" stroke-width="0.9"/>
<path d="M32.8 162.5l4.8 3.8l-4.8 3.8z" fill="none" stroke="#555" stroke-width="0.9"/>
<path d="M32.8 181.7l4.8 3.8l-4.8 3.8z" fill="none" stroke="#555" stroke-width="0.9"/>
<path d="M32.8 201.0l4.8 3.8l-4.8 3.8z" fill="none" stroke="#555" stroke-width="0.9"/>
<path d="M32.8 219.89999999999998l4.8 3.8l-4.8 3.8z" fill="none" stroke="#555" stroke-width="0.9"/>
<path d="M32.8 239.39999999999998l4.8 3.8l-4.8 3.8z" fill="none" stroke="#555" stroke-width="0.9"/>
<circle cx="55.3" cy="147" r="4.54" fill="#8a8a8a"/><rect x="53.98" y="140.70" width="2.65" height="3.15" fill="#8a8a8a" transform="rotate(0.0 55.3 147)"/><rect x="53.98" y="140.70" width="2.65" height="3.15" fill="#8a8a8a" transform="rotate(45.0 55.3 147)"/><rect x="53.98" y="140.70" width="2.65" height="3.15" fill="#8a8a8a" transform="rotate(90.0 55.3 147)"/><rect x="53.98" y="140.70" width="2.65" height="3.15" fill="#8a8a8a" transform="rotate(135.0 55.3 147)"/><rect x="53.98" y="140.70" width="2.65" height="3.15" fill="#8a8a8a" transform="rotate(180.0 55.3 147)"/><rect x="53.98" y="140.70" width="2.65" height="3.15" fill="#8a8a8a" transform="rotate(225.0 55.3 147)"/><rect x="53.98" y="140.70" width="2.65" height="3.15" fill="#8a8a8a" transform="rotate(270.0 55.3 147)"/><rect x="53.98" y="140.70" width="2.65" height="3.15" fill="#8a8a8a" transform="rotate(315.0 55.3 147)"/><circle cx="55.3" cy="147" r="2.02" fill="#f0f0f0"/>
<path d="M48.7 161.3h5l1.2 1.5h6.8v9h-13z" fill="#8f8f8f"/>
<path d="M49 185.5q6 -6 12.5 0q-6.5 6 -12.5 0z" fill="#dcdcdc"/><path d="M50.5 180.5l10 10" stroke="#d0d0d0" stroke-width="1"/>
<path d="M48.85 204.8q6.25 -7.5 12.5 0q-6.25 7.5 -12.5 0z" fill="#8c8c8c"/><circle cx="55.1" cy="204.8" r="2.4" fill="#f0f0f0"/><circle cx="55.1" cy="204.8" r="1.3" fill="#8c8c8c"/>
<path d="M48.85 223.7q6.25 -7.5 12.5 0q-6.25 7.5 -12.5 0z" fill="#8c8c8c"/><circle cx="55.1" cy="223.7" r="2.4" fill="#f0f0f0"/><circle cx="55.1" cy="223.7" r="1.3" fill="#8c8c8c"/>
<path d="M48.85 243.2q6.25 -7.5 12.5 0q-6.25 7.5 -12.5 0z" fill="#8c8c8c"/><circle cx="55.1" cy="243.2" r="2.4" fill="#f0f0f0"/><circle cx="55.1" cy="243.2" r="1.3" fill="#8c8c8c"/>
<path d="M68.5 180.5h5l1.2 1.5h6.8v9h-13z" fill="#8f8f8f"/>
<path d="M68.5 199.8h5l1.2 1.5h6.8v9h-13z" fill="#8f8f8f"/>
<path d="M68.5 218.7h5l1.2 1.5h6.8v9h-13z" fill="#8f8f8f"/>
<path d="M68.5 238.2h5l1.2 1.5h6.8v9h-13z" fill="#8f8f8f"/>
<circle cx="230.3" cy="511" r="3.8" fill="#2e2e2e"/><path d="M230.3 509v4M228.3 511h4" stroke="#ccc" stroke-width="0.9"/>
<path d="M239 505.5v10M241 506.5v8" stroke="#999" stroke-width="0.8"/>
<path d="M967.3 114.2L995 111.3L1003 125.5L973 128.5z" fill="#efefef" stroke="#c4c4c4" stroke-width="0.8"/>
<path d="M973 128.5L1002 126.8L1006 149.3L973.1 154.6z" fill="#e6e6e6" stroke="#c4c4c4" stroke-width="0.8"/>
<path d="M967.3 114.2L973 128.5L973.1 154.6L967 141z" fill="#d8d8d8"/>
<path d="M974 155.5L1006 150.3" stroke="#000" stroke-opacity="0.12" stroke-width="2"/>
<text x="976.5" y="144" font-family="Liberation Sans" font-size="7.5" fill="#777" transform="rotate(-5 987 140)">FRONT</text>
<text x="979" y="121.5" font-family="Liberation Sans" font-size="6" fill="#999" transform="rotate(-6 985 119)">TOP</text>
<path d="M969 129.5h30" stroke="#bbb" stroke-width="0.6" stroke-dasharray="3 2" transform="rotate(-4 985 129)"/>
<path d="M973.1 154.6L971.7 124.5" stroke="#4b55e8" stroke-width="1.5"/>
<path d="M973.1 154.6L1006 149.3" stroke="#e04848" stroke-width="1.5"/>
<path d="M973.1 154.6L966.3 130.3" stroke="#7ed07e" stroke-width="1"/>
<text x="967.5" y="122.5" font-family="Liberation Sans" font-weight="bold" font-size="8" fill="#5560e8">Z</text>
<text x="1007" y="152" font-family="Liberation Sans" font-size="8" fill="#f07070">X</text>
<path d="M419.5 505l-2.5 3h1.5v6.5h-1.5l2.5 3l2.5 -3h-1.5v-6.5h1.5z" fill="#fafafa" stroke="#777" stroke-width="0.8"/>
<path d="M415.5 513.5q-2.5 -1 -1 -2.5q2 -1.5 5 -1.5q5 0 6 2q0.5 1.5 -3 2.5" fill="none" stroke="#666" stroke-width="0.9"/><path d="M414 513.8l2.5 -1.2l-0.3 2.5z" fill="#444"/>
<path d="M429.5 510.5h4l-2 2.3z" fill="#333"/>
<path d="M440.5 509.5h11v7h-11z" fill="#a8a8a8" stroke="#8a8a8a" stroke-width="0.6"/><path d="M441 509.5l1.5 -3l3 1.5l0.5 1.5M446 509l2 -2l3 1l0.5 1.5" fill="#a0a0a0" stroke="#8a8a8a" stroke-width="0.6"/><path d="M442 512h8M442 514h8" stroke="#d8d8d8" stroke-width="0.7"/>
<path d="M462.5 513.5v-5.5a0.9 0.9 0 0 1 1.8 0v3.5v-5a0.9 0.9 0 0 1 1.8 0v5v-5.3a0.9 0.9 0 0 1 1.8 0v5.3v-4.3a0.9 0.9 0 0 1 1.8 0v6.5q0 4 -3.5 4h-1.5q-2 0 -3.5 -2.5l-2 -3q0.8 -1 1.5 -0.3z" fill="#fdfdfd" stroke="#777" stroke-width="0.8"/>
<circle cx="485.5" cy="510.5" r="4" fill="#eef4fa" stroke="#555" stroke-width="1.1"/><path d="M488.5 513.5l4 4" stroke="#333" stroke-width="1.8"/><path d="M491 506v4M489 508h4" stroke="#555" stroke-width="0.8"/>
<rect x="501" y="505.5" width="12" height="12" fill="none" stroke="#999" stroke-width="0.7" stroke-dasharray="1.5 1"/><circle cx="506" cy="510.5" r="3.8" fill="#eef4fa" stroke="#555" stroke-width="1.1"/><path d="M508.8 513.3l3.5 3.5" stroke="#333" stroke-width="1.8"/><path d="M517.5 510.5h4l-2 2.3z" fill="#333"/>
<defs><linearGradient id="gridg" x1="0" y1="0" x2="0" y2="1"><stop offset="0" stop-color="#d0d0d0"/><stop offset="1" stop-color="#8c8c8c"/></linearGradient></defs>
<rect x="535" y="505.5" width="12.5" height="9.5" rx="0.8" fill="#93b8e2" stroke="#8c8c8c" stroke-width="1"/><path d="M539 517h5" stroke="#9a9a9a" stroke-width="1.4"/><path d="M541.3 515v2" stroke="#9a9a9a" stroke-width="1"/><path d="M549.3 510h4l-2 2.6z" fill="#222"/>
<rect x="559.3" y="505.3" width="12.5" height="12.3" rx="1" fill="url(#gridg)"/><path d="M562.5 505.5v12M565.5 505.5v12M568.5 505.5v12M559.3 508.5h12.5M559.3 511.5h12.5M559.3 514.5h12.5" stroke="#dcdcdc" stroke-opacity="0.6" stroke-width="0.5"/><path d="M574 510h4l-2 2.6z" fill="#222"/>
<rect x="584.3" y="506" width="11.8" height="11" rx="1" fill="#6e9ed6" stroke="#6a92c8" stroke-width="0.6"/><rect x="585.3" y="507" width="4.4" height="3.9" fill="#9cc3ea"/><rect x="590.7" y="507" width="4.4" height="3.9" fill="#9cc3ea"/><rect x="585.3" y="512" width="4.4" height="3.9" fill="#9cc3ea"/><rect x="590.7" y="512" width="4.4" height="3.9" fill="#9cc3ea"/><path d="M598.5 510h4l-2 2.6z" fill="#222"/>
<rect x="8.8" y="538.8" width="2" height="11" fill="#444"/><path d="M18.8 538.8v11l-7.5 -5.5z" fill="#444"/>
<path d="M29 544.3l7.5 -5.5v11z" fill="#444"/><rect x="37.3" y="541.5" width="2" height="5.5" fill="#444"/>
<path d="M49 538.8v11l9.4 -5.5z" fill="#444"/>
<rect x="67.9" y="541.5" width="2" height="5.5" fill="#444"/><path d="M70.5 538.8v11l7.5 -5.5z" fill="#444"/>
<path d="M89 538.8v11l7.5 -5.5z" fill="#444"/><rect x="96.8" y="538.8" width="2" height="11" fill="#444"/>
<path d="M123 553.5v4h96v-4M142 553.5v4M161.5 553.5v4M180.5 553.5v4M199.5 553.5v4" stroke="#bdbdbd" stroke-width="1" fill="none"/>
<rect x="117.5" y="537.5" width="11" height="11" fill="none" stroke="#aaa" stroke-width="0.7"/><circle cx="117.5" cy="537.5" r="0.9" fill="#3b8de0"/><circle cx="128.5" cy="537.5" r="0.9" fill="#3b8de0"/><circle cx="117.5" cy="548.5" r="0.9" fill="#3b8de0"/><path d="M120 540v5.5M120 540h5.5M125.5 540q-0.5 5 -5.5 5.5" stroke="#888" stroke-width="0.6" fill="none"/><path d="M123.5 548.5l5 -5l1.5 1.5l-5 5z" fill="#f2b233"/><circle cx="129" cy="543.3" r="1.3" fill="#e02b2b"/>
<path d="M136 540l2.5 -2.5h8v9l-2.5 2.5h-8z" fill="#67ace6"/><path d="M144 540l2.5 -2.5v9l-2.5 2.5z" fill="#4a90d0"/><path d="M136 549h8l2.5 -2.5v1.5l-2.5 2.5h-8z" fill="#cfcfcf"/><path d="M147.5 548v-10" stroke="#555" stroke-width="0.7"/>
<path d="M155.5 541l3 -3h4q5 1 5 6v4l-2.5 2.5h-9.5z" fill="#d9d9d9" stroke="#888" stroke-width="0.7"/><path d="M161.5 538q5.5 0.5 6 6l-3 2.5q-0.5 -4.5 -4.5 -5z" fill="#5aa6e4"/>
<path d="M175 541l3 -3h2v12.5h-5z" fill="#e0e0e0" stroke="#888" stroke-width="0.6"/><path d="M179 541l3.5 -3.5v9.5l-3.5 3.5z" fill="#4fba6a"/><path d="M183.5 541l3.5 -3.5v9.5l-3.5 3.5z" fill="#e8915a"/>
<rect x="193.5" y="537.5" width="11" height="11" fill="none" stroke="#aaa" stroke-width="0.7"/><circle cx="193.5" cy="537.5" r="0.9" fill="#3b8de0"/><circle cx="204.5" cy="537.5" r="0.9" fill="#3b8de0"/><circle cx="193.5" cy="548.5" r="0.9" fill="#3b8de0"/><path d="M196 540v5.5M196 540h5.5M201.5 540q-0.5 5 -5.5 5.5" stroke="#888" stroke-width="0.6" fill="none"/><path d="M199.5 548.5l5 -5l1.5 1.5l-5 5z" fill="#f2b233"/><circle cx="205" cy="543.3" r="1.3" fill="#e02b2b"/>
<path d="M212 540l2.5 -2.5h8v9l-2.5 2.5h-8z" fill="#67ace6"/><path d="M220 540l2.5 -2.5v9l-2.5 2.5z" fill="#4a90d0"/><path d="M212 549h8l2.5 -2.5v1.5l-2.5 2.5h-8z" fill="#cfcfcf"/><path d="M223.5 548v-10" stroke="#555" stroke-width="0.7"/>
<path d="M225 532.5h8l-1 2.5l-2.5 2.5v21h-1v-21l-2.5 -2.5z" fill="#5c5c5c"/><rect x="228.2" y="536" width="2" height="22" fill="#5c5c5c"/>
<circle cx="1006.4" cy="544.2" r="4.75" fill="#8a8a8a"/><rect x="1005.01" y="537.60" width="2.77" height="3.30" fill="#8a8a8a" transform="rotate(0.0 1006.4 544.2)"/><rect x="1005.01" y="537.60" width="2.77" height="3.30" fill="#8a8a8a" transform="rotate(45.0 1006.4 544.2)"/><rect x="1005.01" y="537.60" width="2.77" height="3.30" fill="#8a8a8a" transform="rotate(90.0 1006.4 544.2)"/><rect x="1005.01" y="537.60" width="2.77" height="3.30" fill="#8a8a8a" transform="rotate(135.0 1006.4 544.2)"/><rect x="1005.01" y="537.60" width="2.77" height="3.30" fill="#8a8a8a" transform="rotate(180.0 1006.4 544.2)"/><rect x="1005.01" y="537.60" width="2.77" height="3.30" fill="#8a8a8a" transform="rotate(225.0 1006.4 544.2)"/><rect x="1005.01" y="537.60" width="2.77" height="3.30" fill="#8a8a8a" transform="rotate(270.0 1006.4 544.2)"/><rect x="1005.01" y="537.60" width="2.77" height="3.30" fill="#8a8a8a" transform="rotate(315.0 1006.4 544.2)"/><circle cx="1006.4" cy="544.2" r="2.11" fill="#ececec"/>
</svg>
</body></html>
